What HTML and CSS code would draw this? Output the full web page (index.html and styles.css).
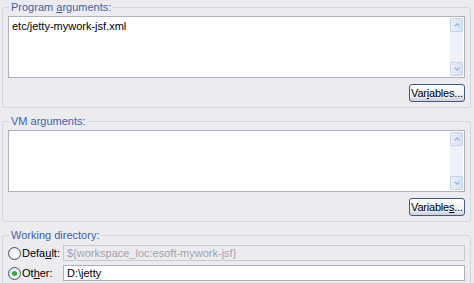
FILE: index.html
```html
<!DOCTYPE html>
<html lang="en">
<head>
  <meta charset="UTF-8" />
  <title>Arguments</title>
  <link rel="stylesheet" href="styles.css">
</head>
<body>

<!-- Program arguments -->
<fieldset class="group">
  <legend>Program <u>a</u>rguments:</legend>
  <div class="textbox">
    <div class="text">etc/jetty-mywork-jsf.xml</div>
    <div class="scrollbar">
      <span class="arrow up"></span>
      <span class="arrow down"></span>
    </div>
  </div>
  <div class="actions">
    <button class="btn">Var<u>i</u>ables...</button>
  </div>
</fieldset>

<!-- VM arguments -->
<fieldset class="group">
  <legend>VM arguments:</legend>
  <div class="textbox">
    <div class="text"></div>
    <div class="scrollbar">
      <span class="arrow up"></span>
      <span class="arrow down"></span>
    </div>
  </div>
  <div class="actions">
    <button class="btn">Variable<u>s</u>...</button>
  </div>
</fieldset>

<!-- Working directory -->
<fieldset class="group workdir">
  <legend>Working directory:</legend>
  <div class="row">
    <span class="radio"></span>
    <span class="radio-label">Defa<u>u</u>lt:</span>
    <div class="field disabled">${workspace_loc:esoft-mywork-jsf}</div>
  </div>
  <div class="row">
    <span class="radio checked"></span>
    <span class="radio-label">Ot<u>h</u>er:</span>
    <div class="field">D:\jetty</div>
  </div>
</fieldset>

</body>
</html>
```

FILE: styles.css
```css
body {
    margin: 0;
    padding-top: 1px;
    background: #ecebf0;
    font-family: "Liberation Sans", Arial, sans-serif;
    font-size: 11px;
    color: #000;
}

/* Group boxes */
.group {
    margin: 0 3px 7px 2px;
    padding: 2px 5px 5px 5px;
    border: 1px solid #d6d4dc;
    border-radius: 3px;
}

.group legend {
    margin-left: 1px;
    padding: 0 2px;
    line-height: 13px;
    color: #3f5fa8;
}

/* Multi-line text with scrollbar */
.textbox {
    display: flex;
    height: 60px;
    background: #fff;
    border: 1px solid #b1b0bd;
}

.textbox .text {
    flex: 1;
    padding: 3px 3px;
    line-height: 13px;
}

.scrollbar {
    width: 13px;
    margin: 1px 1px 1px 0;
    display: flex;
    flex-direction: column;
    justify-content: space-between;
    background: #eef1f8;
}

.arrow {
    height: 14px;
    box-sizing: border-box;
    border: 1px solid #c6d3ec;
    border-radius: 2px;
    background: linear-gradient(90deg, #e9eef9, #d9e2f4);
    position: relative;
}

.arrow::after {
    content: "";
    position: absolute;
    left: 4px;
    width: 3px;
    height: 3px;
    border-left: 1px solid #97a9cd;
    border-top: 1px solid #97a9cd;
}

.arrow.up::after {
    top: 5px;
    transform: rotate(45deg);
}

.arrow.down::after {
    top: 3px;
    transform: rotate(225deg);
}

/* Button row */
.actions {
    display: flex;
    justify-content: flex-end;
    margin-top: 6px;
}

.btn {
    width: 56px;
    height: 18px;
    padding: 0;
    font: inherit;
    letter-spacing: -0.2px;
    color: #000;
    border: 1px solid #4a5878;
    border-radius: 3px;
    background: linear-gradient(#ffffff, #eceef4 70%, #c9cedb);
}

/* Working directory rows */
.workdir {
    padding-top: 1px;
    margin-bottom: 0;
}

.row {
    display: flex;
    align-items: center;
    height: 20px;
}

.radio {
    width: 11px;
    height: 11px;
    border: 1px solid #3c5170;
    border-radius: 50%;
    background: radial-gradient(circle at 60% 60%, #ffffff, #e3e3e8);
    display: flex;
    align-items: center;
    justify-content: center;
}

.radio.checked::after {
    content: "";
    width: 5px;
    height: 5px;
    border-radius: 50%;
    background: #35a83a;
}

.radio-label {
    width: 41px;
    margin-left: 1px;
}

.field {
    flex: 1;
    height: 14px;
    padding: 0 3px;
    line-height: 14px;
    background: #fff;
    border: 1px solid #b1b0bd;
}

.field.disabled {
    background: #ecebf0;
    color: #a3a2ae;
    border-color: #c9c8d2;
}
```
